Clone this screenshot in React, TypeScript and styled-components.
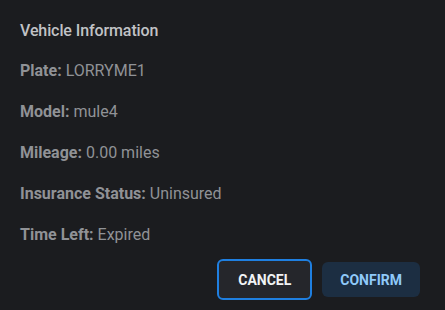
import styled, { createGlobalStyle } from 'styled-components';

const GlobalStyle = createGlobalStyle`
  html, body {
    margin: 0;
    padding: 0;
    background: #1b1c1f;
  }
  * {
    box-sizing: border-box;
  }
`;

const Dialog = styled.div`
  width: 440px;
  height: 310px;
  background: #1b1c1f;
  padding: 21px 20px 0 20px;
  font-family: Roboto, 'Liberation Sans', sans-serif;
  display: flex;
  flex-direction: column;
`;

const Title = styled.h2`
  margin: 0;
  font-size: 16px;
  font-weight: 500;
  line-height: 20px;
  color: #c1c2c5;
  letter-spacing: -0.1px;
`;

const InfoList = styled.div`
  display: flex;
  flex-direction: column;
  gap: 21px;
  margin-top: 20px;
`;

const Row = styled.div`
  font-size: 16px;
  line-height: 20px;
  color: #909296;
`;

const Label = styled.span`
  font-weight: 700;
`;

const Footer = styled.div`
  display: flex;
  justify-content: flex-end;
  align-items: center;
  gap: 10px;
  margin-top: 14px;
`;

const Button = styled.button<{ $primary?: boolean }>`
  font-family: Roboto, 'Liberation Sans', sans-serif;
  font-size: 14px;
  font-weight: 700;
  text-transform: uppercase;
  cursor: pointer;
  border-radius: 6px;
  height: ${(p) => (p.$primary ? '35px' : '41px')};
  padding: 0 ${(p) => (p.$primary ? '18px' : '19px')};
  color: ${(p) => (p.$primary ? '#8fc9f9' : '#f1f3f5')};
  background: ${(p) => (p.$primary ? '#1c2e42' : '#25262b')};
  border: ${(p) => (p.$primary ? 'none' : '2px solid #1f7fe0')};
`;

export default function App() {
  return (
    <>
      <GlobalStyle />
      <Dialog>
        <Title>Vehicle Information</Title>
        <InfoList>
          <Row>
            <Label>Plate:</Label> LORRYME1
          </Row>
          <Row>
            <Label>Model:</Label> mule4
          </Row>
          <Row>
            <Label>Mileage:</Label> 0.00 miles
          </Row>
          <Row>
            <Label>Insurance Status:</Label> Uninsured
          </Row>
          <Row>
            <Label>Time Left:</Label> Expired
          </Row>
        </InfoList>
        <Footer>
          <Button>Cancel</Button>
          <Button $primary>Confirm</Button>
        </Footer>
      </Dialog>
    </>
  );
}
